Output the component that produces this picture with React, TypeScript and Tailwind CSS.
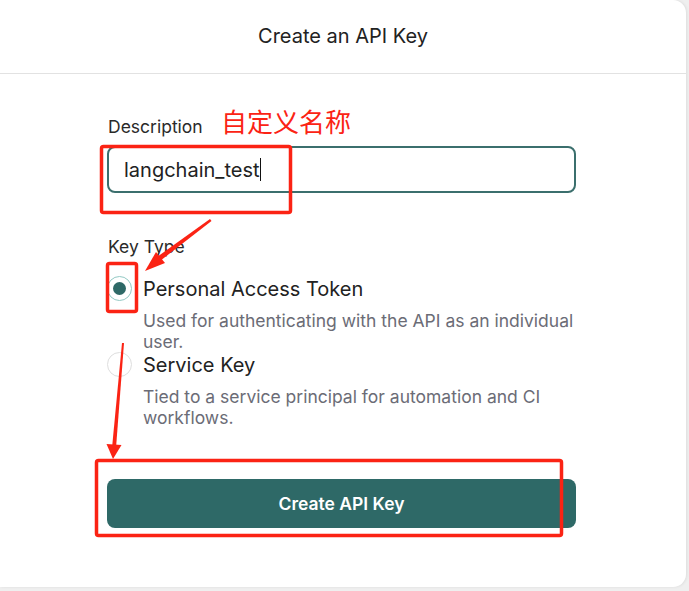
import React from "react";

const RED = "#fb2314";

function Radio({ checked }: { checked: boolean }) {
  return (
    <span
      className={`flex h-[25px] w-[25px] shrink-0 items-center justify-center rounded-full border ${
        checked ? "border-[#93c9c4]" : "border-[#dedede]"
      }`}
    >
      {checked && <span className="h-[13px] w-[13px] rounded-full bg-[#2e6967]" />}
    </span>
  );
}

function KeyOption({ title, description, checked }: { title: string; description: string; checked: boolean }) {
  return (
    <div className="flex items-start gap-[11px]">
      <Radio checked={checked} />
      <div className="flex flex-col">
        <span className="text-[20px] leading-[26px] text-[#222]">{title}</span>
        <span className="mt-2 text-[17.5px] leading-[21px] text-[#6b6c76]">{description}</span>
      </div>
    </div>
  );
}

function Annotations() {
  return (
    <>
      <span
        className="absolute left-[221px] top-[105px] text-[26px] leading-[32px] text-[#fb2314]"
        style={{ fontFamily: '"Noto Sans CJK SC", sans-serif' }}
      >
        自定义名称
      </span>
      <svg className="pointer-events-none absolute inset-0" width="689" height="591">
        <g fill="none" stroke={RED} strokeWidth="3.5">
          <rect x="101.5" y="146.5" width="189" height="66" rx="2" />
          <rect x="107.5" y="263.5" width="29" height="48" rx="2" />
          <rect x="96.5" y="460.5" width="465" height="75" rx="2" />
        </g>
        <g fill={RED}>
          <polygon points="210,219 211.5,221 160,261 157,257" />
          <polygon points="145,271 165,263 156,252" />
          <polygon points="122,343 124,343 116,448 112,448" />
          <polygon points="113,459 121.5,445 106.5,444" />
        </g>
      </svg>
    </>
  );
}

export default function App() {
  return (
    <div
      className="relative h-[591px] w-[689px] overflow-hidden bg-[#efefef]"
      style={{ fontFamily: "Inter, 'Liberation Sans', sans-serif" }}
    >
      <div className="flex h-[587px] w-[686px] flex-col rounded-r-[13px] bg-white shadow-[1px_0_3px_rgba(0,0,0,0.08)]">
        <div className="flex h-[74px] shrink-0 items-center justify-center border-b border-[#e2e2e2] pb-[2px]">
          <h2 className="text-[20px] text-[#222]">Create an API Key</h2>
        </div>
        <div className="flex w-[576px] flex-col pl-[107px] pt-[42px]">
          <label className="pl-px text-[17.5px] leading-[22px] text-[#2a2a2a]">Description</label>
          <div className="mt-2 flex h-[47px] items-center rounded-lg border-2 border-[#3b6f6d] pl-[15px]">
            <span className="text-[20px] text-[#222]">langchain_test</span>
            <span className="h-[23px] w-px bg-[#111]" />
          </div>
          <span className="mt-[43px] pl-px text-[17.5px] leading-[22px] text-[#2a2a2a]">Key Type</span>
          <div className="mt-[18px] flex flex-col">
            <KeyOption
              checked
              title="Personal Access Token"
              description="Used for authenticating with the API as an individual user."
            />
            <KeyOption
              checked={false}
              title="Service Key"
              description="Tied to a service principal for automation and CI workflows."
            />
          </div>
          <button className="mt-[51px] flex h-[49px] w-full items-center justify-center rounded-lg bg-[#2e6967] pt-[2px] text-[17.5px] font-semibold text-white">
            Create API Key
          </button>
        </div>
      </div>
      <Annotations />
    </div>
  );
}
